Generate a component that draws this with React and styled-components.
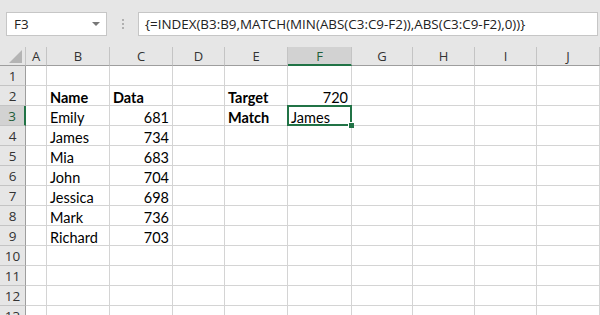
import styled, { createGlobalStyle } from 'styled-components';

const GlobalStyle = createGlobalStyle`
  html, body {
    margin: 0;
    padding: 0;
    background: #ffffff;
  }
  * {
    box-sizing: border-box;
  }
`;

const COLUMNS = ['A', 'B', 'C', 'D', 'E', 'F', 'G', 'H', 'I', 'J'];
// 행 머리 + A..J 열 너비
const WIDTHS = [26, 21, 63, 63, 52, 63, 64, 61, 62, 62, 63];

const DATA = {
  2: { B: { v: 'Name', bold: true }, C: { v: 'Data', bold: true }, E: { v: 'Target', bold: true }, F: { v: '720', right: true } },
  3: { B: { v: 'Emily' }, C: { v: '681', right: true }, E: { v: 'Match', bold: true }, F: { v: 'James' } },
  4: { B: { v: 'James' }, C: { v: '734', right: true } },
  5: { B: { v: 'Mia' }, C: { v: '683', right: true } },
  6: { B: { v: 'John' }, C: { v: '704', right: true } },
  7: { B: { v: 'Jessica' }, C: { v: '698', right: true } },
  8: { B: { v: 'Mark' }, C: { v: '736', right: true } },
  9: { B: { v: 'Richard' }, C: { v: '703', right: true } },
};

const ACTIVE = { row: 3, col: 'F' };
const ROW_COUNT = 13;

const Page = styled.div`
  width: 600px;
  height: 315px;
  overflow: hidden;
  background: #ffffff;
`;

const FormulaBar = styled.div`
  height: 47px;
  background: #e6e6e6;
  display: flex;
  align-items: flex-start;
  padding: 12px 2px 0 6px;
  font-family: 'Open Sans', 'Noto Sans', sans-serif;
  font-size: 13.4px;
  color: #222;
`;

const NameBox = styled.div`
  width: 101px;
  height: 24px;
  background: #ffffff;
  border: 1px solid #c6c6c6;
  display: flex;
  align-items: center;
  justify-content: space-between;
  padding: 0 6px 0 7px;
`;

const DropArrow = styled.span`
  width: 0;
  height: 0;
  border-left: 4px solid transparent;
  border-right: 4px solid transparent;
  border-top: 4px solid #777;
`;

const Dots = styled.div`
  width: 31px;
  height: 24px;
  display: flex;
  flex-direction: column;
  align-items: center;
  justify-content: center;
  gap: 2px;

  span {
    width: 2px;
    height: 2px;
    background: #b0b0b0;
  }
`;

const FormulaInput = styled.div`
  flex: 1;
  height: 24px;
  background: #ffffff;
  border: 1px solid #c6c6c6;
  display: flex;
  align-items: center;
  padding-left: 6px;
  white-space: nowrap;
  overflow: hidden;
`;

const Sheet = styled.div`
  display: grid;
  grid-template-columns: ${WIDTHS.map((w) => `${w}px`).join(' ')};
  grid-template-rows: 19px repeat(${ROW_COUNT}, 20px);
`;

const Corner = styled.div`
  background: #e6e6e6;
  border-right: 1px solid #c4c4c4;
  border-bottom: 1px solid #9e9e9e;
  display: flex;
  align-items: flex-end;
  justify-content: flex-end;
  padding: 0 3px 2px 0;
`;

const ColHeader = styled.div`
  background: ${(p) => (p.$active ? '#d2d2d2' : '#e6e6e6')};
  border-right: 1px solid #c4c4c4;
  border-bottom: ${(p) => (p.$active ? '2px solid #217346' : '1px solid #9e9e9e')};
  color: ${(p) => (p.$active ? '#1e5e3a' : '#333')};
  font-family: 'Open Sans', 'Noto Sans', sans-serif;
  font-size: 13px;
  line-height: 19px;
  text-align: center;
`;

const RowHeader = styled.div`
  background: ${(p) => (p.$active ? '#d2d2d2' : '#e6e6e6')};
  border-right: ${(p) => (p.$active ? '2px solid #217346' : '1px solid #9e9e9e')};
  border-bottom: 1px solid #c4c4c4;
  color: ${(p) => (p.$active ? '#1e5e3a' : '#333')};
  font-family: 'Open Sans', 'Noto Sans', sans-serif;
  font-size: 13.5px;
  line-height: 20px;
  text-align: center;
`;

const Cell = styled.div`
  position: relative;
  border-right: 1px solid #d4d4d4;
  border-bottom: 1px solid #d4d4d4;
  font-family: Lato, 'Open Sans', sans-serif;
  font-size: 14.5px;
  font-weight: ${(p) => (p.$bold ? 700 : 400)};
  color: #000;
  line-height: 19px;
  padding: 2px 3px 0 3px;
  text-align: ${(p) => (p.$right ? 'right' : 'left')};
  white-space: nowrap;
  z-index: ${(p) => (p.$active ? 2 : 'auto')};

  ${(p) =>
    p.$active &&
    `
    &::after {
      content: '';
      position: absolute;
      left: -1px;
      top: -1px;
      right: -1px;
      bottom: -1px;
      border: 2px solid #217346;
    }
  `}
`;

const FillHandle = styled.span`
  position: absolute;
  right: -3px;
  bottom: -3px;
  width: 6px;
  height: 6px;
  background: #217346;
  border-left: 1px solid #fff;
  border-top: 1px solid #fff;
  z-index: 3;
`;

const Row = ({ row }) => {
  const data = DATA[row] || {};
  return (
    <>
      <RowHeader $active={row === ACTIVE.row}>{row}</RowHeader>
      {COLUMNS.map((c) => {
        const cell = data[c];
        const active = row === ACTIVE.row && c === ACTIVE.col;
        return (
          <Cell key={c} $bold={cell?.bold} $right={cell?.right} $active={active}>
            {cell?.v}
            {active && <FillHandle />}
          </Cell>
        );
      })}
    </>
  );
};

const App = () => {
  const rows = Array.from({ length: ROW_COUNT }, (_, i) => i + 1);

  return (
    <Page>
      <GlobalStyle />
      <FormulaBar>
        <NameBox>
          <span>F3</span>
          <DropArrow />
        </NameBox>
        <Dots>
          <span />
          <span />
          <span />
        </Dots>
        <FormulaInput>{'{=INDEX(B3:B9,MATCH(MIN(ABS(C3:C9-F2)),ABS(C3:C9-F2),0))}'}</FormulaInput>
      </FormulaBar>

      <Sheet>
        <Corner>
          <svg width="13" height="13" viewBox="0 0 13 13">
            <polygon points="13,0 13,13 0,13" fill="#b4b4b4" />
          </svg>
        </Corner>
        {COLUMNS.map((c) => (
          <ColHeader key={c} $active={c === ACTIVE.col}>
            {c}
          </ColHeader>
        ))}

        {rows.map((r) => (
          <Row key={r} row={r} />
        ))}
      </Sheet>
    </Page>
  );
};

export default App;
